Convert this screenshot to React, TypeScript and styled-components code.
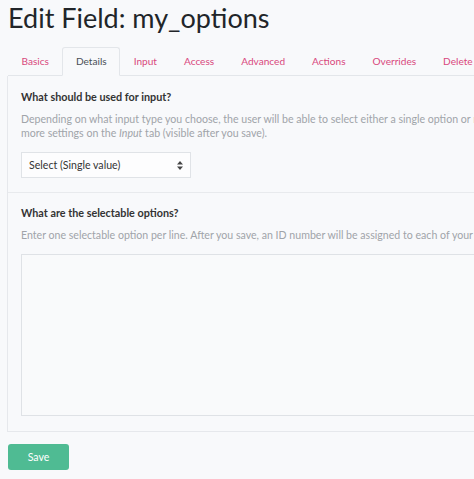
import React from 'react';
import styled, {createGlobalStyle} from 'styled-components';

const GlobalStyle = createGlobalStyle`
  html, body {
    margin: 0;
    padding: 0;
    background: #f8f9fb;
    overflow: hidden;
  }
  body {
    font-family: Lato, "Noto Sans", sans-serif;
    color: #333;
  }
`

const Page = styled.div`
  width: 760px;
  padding: 0 8px;
`

const Title = styled.h1`
  margin: 0;
  padding-top: 1px;
  font-size: 27px;
  font-weight: 400;
  line-height: 34px;
  color: #212529;
`

const Tabs = styled.ul`
  display: flex;
  margin: 12px 0 0;
  padding: 0;
  list-style: none;
  border-bottom: 1px solid #e3e6ea;
`

const Tab = styled.li<{active?: boolean}>`
  margin-bottom: -1px;
  padding: 0 12.5px;
  height: 27px;
  line-height: 27px;
  font-size: 10.1px;
  color: ${p => p.active ? '#495057' : '#d9487d'};
  background: ${p => p.active ? '#f8f9fb' : 'transparent'};
  border: 1px solid ${p => p.active ? '#e3e6ea' : 'transparent'};
  border-bottom-color: ${p => p.active ? '#f8f9fb' : 'transparent'};
  border-radius: 3px 3px 0 0;
`

const Panel = styled.div`
  border: 1px solid #e6e8ec;
  border-top: none;
  margin-left: -1px;
`

const Section = styled.div<{last?: boolean}>`
  padding: ${p => p.last ? '12px 13px 15px' : '13px 13px 14px'};
  border-bottom: ${p => p.last ? 'none' : '1px solid #e8eaed'};
`

const Heading = styled.h3`
  margin: 0;
  font-size: 10.8px;
  font-weight: 700;
  line-height: 16px;
  color: #333;
`

const Help = styled.p<{gap: number}>`
  margin: 7px 0 ${p => p.gap}px;
  font-size: 10.6px;
  line-height: 14px;
  color: #a0a4a9;
  white-space: nowrap;
`

const Select = styled.div`
  display: flex;
  align-items: center;
  justify-content: space-between;
  box-sizing: border-box;
  width: 170px;
  height: 26px;
  padding: 0 7px;
  font-size: 10.6px;
  color: #333;
  background: #fdfdfe;
  border: 1px solid #e0e3e7;
`

const TextArea = styled.textarea`
  display: block;
  box-sizing: border-box;
  width: 100%;
  height: 162px;
  resize: none;
  background: #f9fafb;
  border: 1px solid #dfe2e6;
  border-radius: 0;
`

const SaveButton = styled.button`
  margin-top: 12px;
  width: 61px;
  height: 26px;
  font-family: inherit;
  font-size: 10.6px;
  color: #fff;
  background: #4fbb93;
  border: none;
  border-radius: 3px;
`

const tabs = ['Basics', 'Details', 'Input', 'Access', 'Advanced', 'Actions', 'Overrides', 'Delete']

function SortArrows() {
  return (
    <svg width="6" height="9" viewBox="0 0 6 9">
      <path d="M3 0 L6 3.5 H0 Z M3 9 L6 5.5 H0 Z" fill="#444"/>
    </svg>
  )
}

export default function App() {
  return (
    <Page>
      <GlobalStyle/>
      <Title>Edit Field: my_options</Title>

      <Tabs>
        {tabs.map(t => <Tab key={t} active={t === 'Details'}>{t}</Tab>)}
      </Tabs>

      <Panel>
        <Section>
          <Heading>What should be used for input?</Heading>
          <Help gap={12}>
            Depending on what input type you choose, the user will be able to select either a single option or multiple options. You can configure<br/>
            more settings on the <em>Input</em> tab (visible after you save).
          </Help>
          <Select>
            <span>Select (Single value)</span>
            <SortArrows/>
          </Select>
        </Section>

        <Section last>
          <Heading>What are the selectable options?</Heading>
          <Help gap={12}>Enter one selectable option per line. After you save, an ID number will be assigned to each of your options.</Help>
          <TextArea/>
        </Section>
      </Panel>

      <SaveButton>Save</SaveButton>
    </Page>
  )
}
